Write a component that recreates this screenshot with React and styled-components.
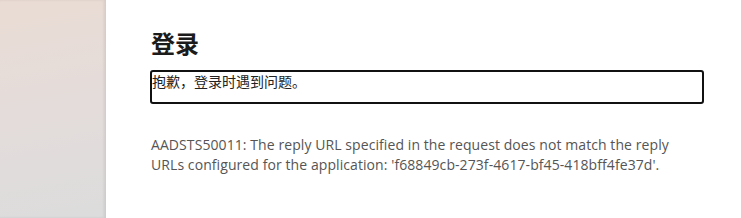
import React from "react";
import styled, { createGlobalStyle } from "styled-components";

const Global = createGlobalStyle`
  html, body { margin: 0; padding: 0; background: #fff; }
  body { font-family: "Open Sans", "Noto Sans CJK SC", sans-serif; }
`;

const Page = styled.div`
  display: flex;
  width: 741px;
  height: 218px;
  overflow: hidden;
`;

const Backdrop = styled.div`
  width: 106px;
  flex: none;
  background: linear-gradient(170deg, #eadcd4 0%, #e3dcdb 55%, #dcdcdc 100%);
  box-shadow: inset -2px 0 3px rgba(0, 0, 0, 0.08);
`;

const Panel = styled.main`
  flex: 1;
  background: #fff;
  padding: 27px 37px 0 44px;
  box-sizing: border-box;
`;

const Title = styled.h1`
  margin: 0 0 11px 1px;
  font-family: "Noto Sans CJK SC", sans-serif;
  font-size: 24px;
  font-weight: 700;
  line-height: 32px;
  color: #1b1b1b;
`;

const MessageBox = styled.div`
  height: 34px;
  box-sizing: border-box;
  border: 2px solid #111;
  border-radius: 3px;
  font-family: "Noto Sans CJK SC", sans-serif;
  font-size: 14px;
  font-weight: 400;
  line-height: 19px;
  color: #222;
  margin-bottom: 31px;
`;

const Detail = styled.p`
  margin: 0 0 0 1px;
  font-size: 14px;
  line-height: 20px;
  letter-spacing: 0.08px;
  color: #555;
`;

export default function App() {
  return (
    <Page>
      <Global />
      <Backdrop />
      <Panel>
        <Title>登录</Title>
        <MessageBox>抱歉，登录时遇到问题。</MessageBox>
        <Detail>
          AADSTS50011: The reply URL specified in the request does not match the reply
          <br />
          URLs configured for the application: 'f68849cb-273f-4617-bf45-418bff4fe37d'.
        </Detail>
      </Panel>
    </Page>
  );
}
